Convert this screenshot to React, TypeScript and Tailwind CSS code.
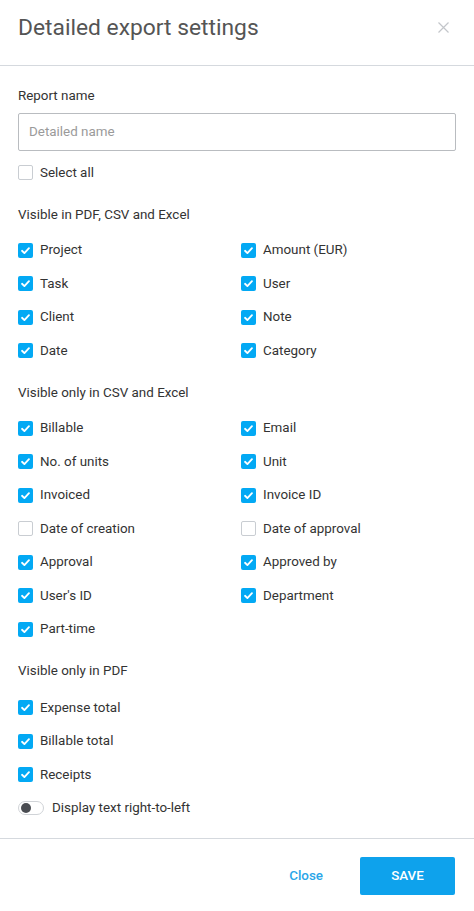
import React from "react";

const Check = ({ checked }: { checked: boolean }) =>
  checked ? (
    <span className="flex h-[15px] w-[15px] shrink-0 items-center justify-center rounded-[2px] bg-[#03a9f4]">
      <svg width="11" height="11" viewBox="0 0 12 12" fill="none">
        <path d="M2.2 6.3 L4.8 8.8 L9.8 3.4" stroke="white" strokeWidth="2" strokeLinecap="round" strokeLinejoin="round" />
      </svg>
    </span>
  ) : (
    <span className="h-[15px] w-[15px] shrink-0 rounded-[2px] border border-[#c9cdd2] bg-white" />
  );

const Row = ({ label, checked = true }: { label: string; checked?: boolean }) => (
  <div className="flex h-[33.5px] items-center gap-[7px]">
    <Check checked={checked} />
    <span className="text-[13.4px] text-[#333]">{label}</span>
  </div>
);

const Label = ({ children, cls }: { children: React.ReactNode; cls: string }) => (
  <div className={`h-[20px] text-[13.4px] leading-[20px] text-[#333] ${cls}`}>{children}</div>
);

export default function App() {
  const sec1: [string, boolean][] = [
    ["Project", true], ["Amount (EUR)", true],
    ["Task", true], ["User", true],
    ["Client", true], ["Note", true],
    ["Date", true], ["Category", true],
  ];
  const sec2: [string, boolean][] = [
    ["Billable", true], ["Email", true],
    ["No. of units", true], ["Unit", true],
    ["Invoiced", true], ["Invoice ID", true],
    ["Date of creation", false], ["Date of approval", false],
    ["Approval", true], ["Approved by", true],
    ["User's ID", true], ["Department", true],
    ["Part-time", true],
  ];
  return (
    <div className="min-h-[911px] w-[474px] bg-white" style={{ fontFamily: "Roboto, 'Liberation Sans', sans-serif" }}>
      <div className="flex h-[66px] items-start justify-between border-b border-[#d5d9de] px-[18px] pt-[14px]">
        <div className="text-[22.8px] leading-[28px] text-[#555]">Detailed export settings</div>
        <svg className="mr-[7px] mt-[8px]" width="11" height="11" viewBox="0 0 11 11">
          <path d="M0.5 0.5 L10.5 10.5 M10.5 0.5 L0.5 10.5" stroke="#c3c6ca" strokeWidth="1.2" />
        </svg>
      </div>
      <div className="border-b border-[#d5d9de] px-[18px] pb-[13px] pt-[20px]">
        <Label cls="">Report name</Label>
        <div className="mt-[7px] flex h-[38px] items-center rounded-[2px] border border-[#b9bcc0] px-[10px] text-[13.4px] text-[#9a9a9a]">
          Detailed name
        </div>
        <div className="mt-[5px]"><Row label="Select all" checked={false} /></div>
        <Label cls="mt-[15px]">Visible in PDF, CSV and Excel</Label>
        <div className="mt-[9px] grid grid-cols-[223px_1fr]">
          {sec1.map(([l, c]) => <Row key={l} label={l} checked={c} />)}
        </div>
        <Label cls="mt-[15px]">Visible only in CSV and Excel</Label>
        <div className="mt-[9px] grid grid-cols-[223px_1fr]">
          {sec2.map(([l, c]) => <Row key={l} label={l} checked={c} />)}
        </div>
        <Label cls="mt-[15px]">Visible only in PDF</Label>
        <div className="mt-[10px]">
          <Row label="Expense total" />
          <Row label="Billable total" />
          <Row label="Receipts" />
        </div>
        <div className="flex h-[33.5px] items-center gap-[8px]">
          <span className="relative h-[14px] w-[26px] rounded-full border border-[#d0d3d7] bg-white">
            <span className="absolute left-[2px] top-[1px] h-[10px] w-[10px] rounded-full bg-[#4a4d52]" />
          </span>
          <span className="text-[13.4px] text-[#333]">Display text right-to-left</span>
        </div>
      </div>
      <div className="flex items-center justify-end gap-[37px] px-[19px] pt-[18px]">
        <span className="text-[13.4px] font-medium text-[#2aa6e8]">Close</span>
        <span className="flex h-[38px] w-[95px] items-center justify-center rounded-[2px] bg-[#0ea2ec] text-[13.4px] font-medium text-white">SAVE</span>
      </div>
    </div>
  );
}
